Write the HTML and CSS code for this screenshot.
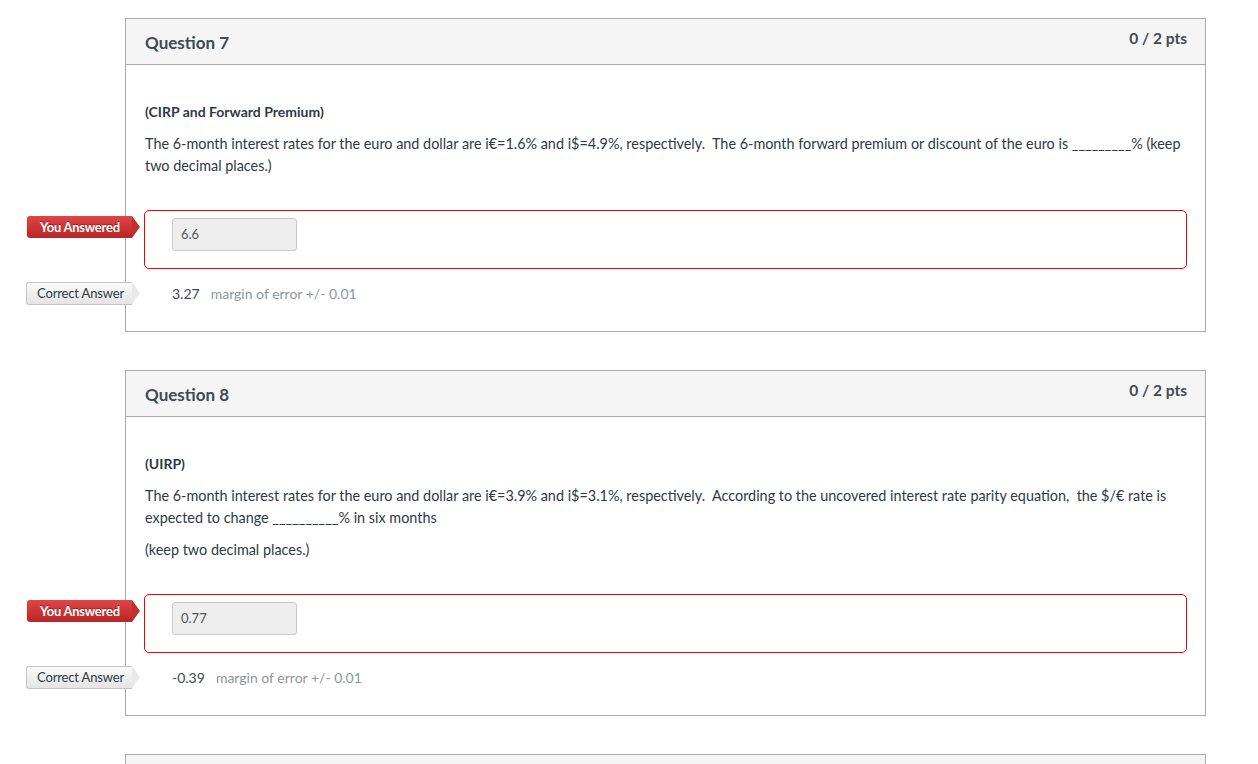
FILE: index.html
```html
<!DOCTYPE html>
<html>
<head>
<meta charset="utf-8">
<link rel="stylesheet" href="styles.css">
</head>
<body>
<div class="page">
  <div class="question">
    <div class="q-header">
      <h2 class="q-title">Question 7</h2>
      <div class="q-pts">0 / 2 pts</div>
    </div>
    <div class="q-body">
      <p class="q-text strong">(CIRP and Forward Premium)</p>
      <p class="q-text">The 6-month interest rates for the euro and dollar are i€=1.6% and i$=4.9%, respectively.&nbsp; The 6-month forward premium or discount of the euro is _________% (keep two decimal places.)</p>
      <div class="answer-row">
        <span class="badge badge-wrong">You Answered</span>
        <div class="answer-box">
          <div class="answer-input">6.6</div>
        </div>
      </div>
      <div class="correct-row">
        <span class="badge badge-correct">Correct Answer</span>
        <span class="correct-val">3.27</span>
        <span class="margin">margin of error +/- 0.01</span>
      </div>
    </div>
  </div>

  <div class="question">
    <div class="q-header">
      <h2 class="q-title">Question 8</h2>
      <div class="q-pts">0 / 2 pts</div>
    </div>
    <div class="q-body">
      <p class="q-text strong">(UIRP)</p>
      <p class="q-text">The 6-month interest rates for the euro and dollar are i€=3.9% and i$=3.1%, respectively.&nbsp; According to the uncovered interest rate parity equation,&nbsp; the $/€ rate is expected to change __________% in six months</p>
      <p class="q-text">(keep two decimal places.)</p>
      <div class="answer-row">
        <span class="badge badge-wrong">You Answered</span>
        <div class="answer-box">
          <div class="answer-input">0.77</div>
        </div>
      </div>
      <div class="correct-row">
        <span class="badge badge-correct">Correct Answer</span>
        <span class="correct-val">-0.39</span>
        <span class="margin">margin of error +/- 0.01</span>
      </div>
    </div>
  </div>

  <div class="question">
    <div class="q-header"></div>
  </div>
</div>
</body>
</html>
```

FILE: styles.css
```css
html, body {
  margin: 0;
  padding: 0;
  background: #fff;
}
body {
  font-family: Lato, "Open Sans", "Liberation Sans", sans-serif;
  color: #2d3b45;
  overflow: hidden;
  height: 764px;
}
.page {
  padding: 18px 0 0 125px;
  width: 1081px;
  display: flex;
  flex-direction: column;
  gap: 38px;
}
.question {
  border: 1px solid #aaaaaa;
  background: #fff;
}
.q-header {
  background: #f5f5f5;
  border-bottom: 1px solid #aaaaaa;
  height: 45px;
  display: flex;
  justify-content: space-between;
  padding: 0 18px 0 19px;
}
.q-title {
  margin: 0;
  font-size: 17px;
  font-weight: 700;
  line-height: 47px;
  color: #3d4b55;
}
.q-pts {
  font-size: 15.5px;
  font-weight: 700;
  line-height: 38px;
  color: #3d4b55;
}
.q-body {
  padding: 36px 0 26px 0;
}
.q-text {
  margin: 0 0 10px 0;
  padding: 0 20px 0 19px;
  font-size: 14.4px;
  line-height: 22px;
}
.q-text.strong {
  font-weight: 700;
  font-size: 14px;
}
.answer-row {
  position: relative;
  margin-top: 33px;
  padding: 0 18px;
}
.answer-box {
  border: 1px solid #f00;
  border-radius: 5px;
  padding: 7px 0 0 27px;
  box-sizing: border-box;
  height: 59px;
}
.answer-input {
  width: 125px;
  height: 33px;
  box-sizing: border-box;
  background: #eeeeee;
  border: 1px solid #c8c8c8;
  border-radius: 3px;
  font-size: 13px;
  line-height: 31px;
  padding-left: 8px;
  color: #555;
}
.correct-row {
  position: relative;
  margin-top: 12px;
  height: 24px;
  display: flex;
  align-items: center;
  padding-left: 46px;
  font-size: 14px;
}
.correct-val {
  color: #3d4b55;
  margin-right: 11px;
}
.margin {
  color: #8b969e;
}
.badge {
  position: absolute;
  left: -99px;
  height: 22px;
  width: 105px;
  box-sizing: border-box;
  font-size: 13px;
  font-weight: 700;
  line-height: 22px;
  padding-left: 13px;
  letter-spacing: -0.25px;
  border-radius: 3px 0 0 3px;
  white-space: nowrap;
}
.badge::after {
  content: "";
  position: absolute;
  right: -8px;
  top: 0;
  width: 0;
  height: 0;
  border-top: 11px solid transparent;
  border-bottom: 11px solid transparent;
  border-left: 8px solid #c82e2e;
}
.badge-wrong {
  top: 6px;
  color: #fff;
  background: linear-gradient(#e04545, #b82525);
  text-shadow: 0 -1px 0 rgba(0,0,0,0.35);
}
.badge-correct {
  top: 1px;
  height: 23px;
  left: -100px;
  width: 106px;
  color: #2d3b45;
  font-weight: 400;
  background: linear-gradient(#fbfbfb, #e4e4e4);
  border: 1px solid #c4c4c4;
  border-right: none;
  padding-left: 10px;
  line-height: 21px;
  letter-spacing: -0.15px;
}
.badge-correct::after {
  top: -1px;
  right: -8px;
  border-top: 11.5px solid transparent;
  border-bottom: 11.5px solid transparent;
  border-left: 8px solid #e9e9e9;
}
```
